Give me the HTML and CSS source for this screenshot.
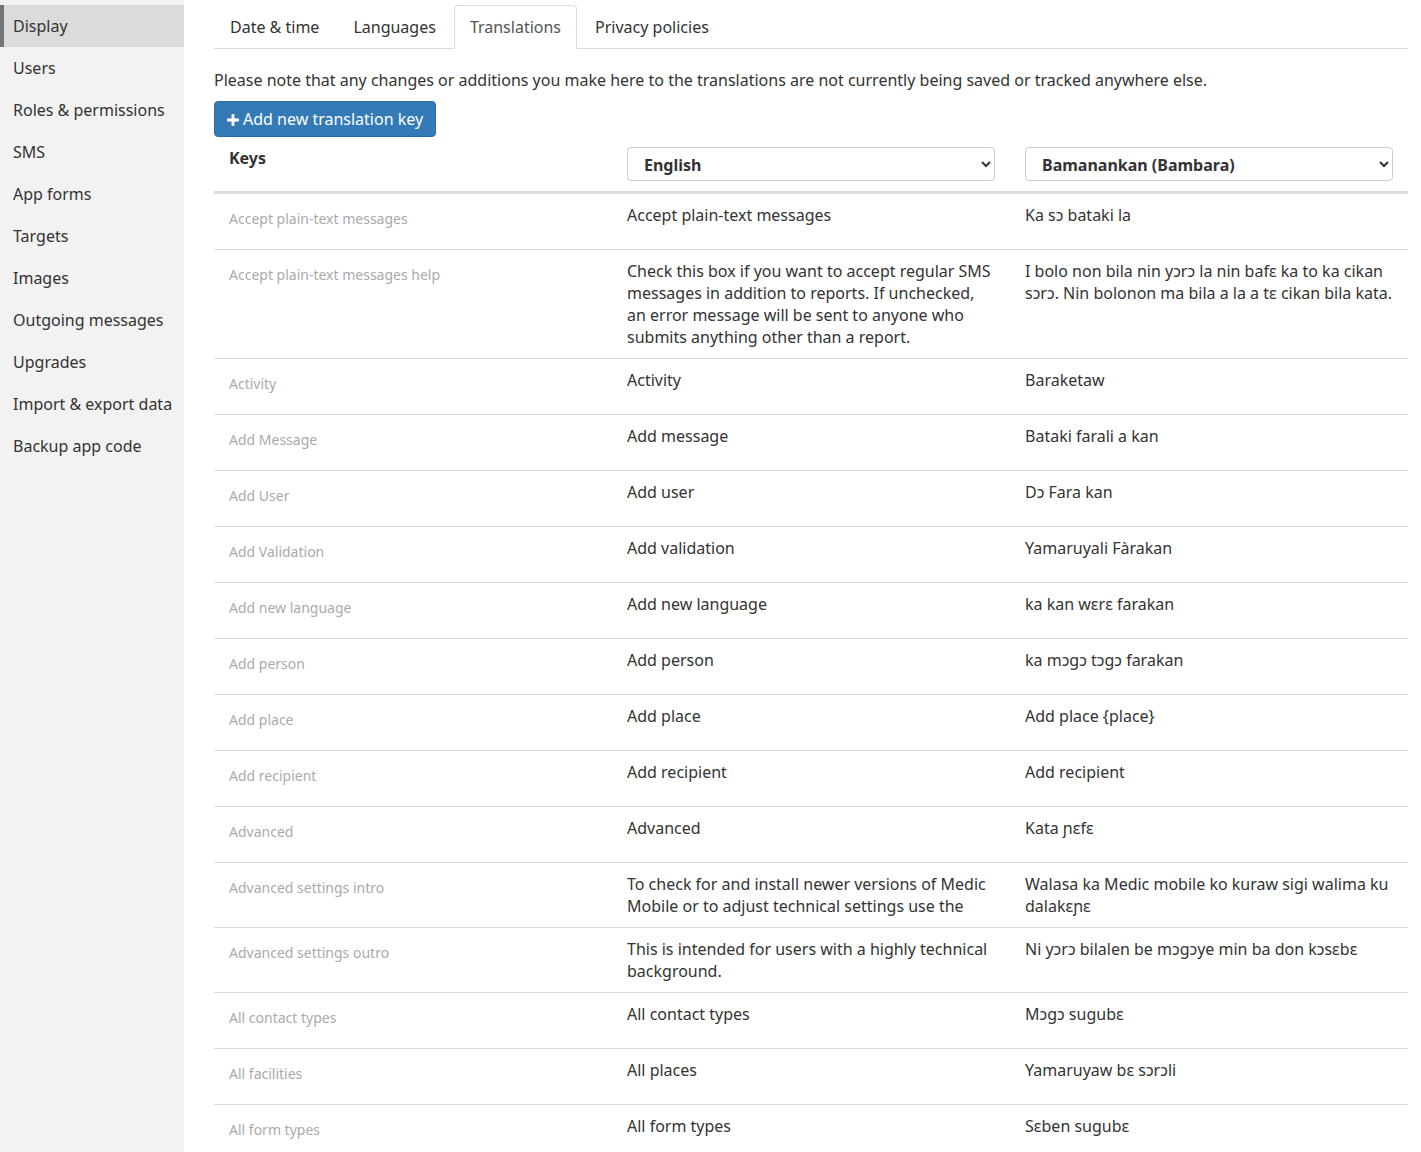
FILE: index.html
```html
<!DOCTYPE html>
<html>
<head>
  <meta charset="UTF-8">
  <title>App settings - Translations</title>
  <link rel="stylesheet" href="styles.css">
</head>
<body>
  <div class="layout">
    <ul class="sidebar">
      <li class="side-item active">Display</li>
      <li class="side-item">Users</li>
      <li class="side-item">Roles &amp; permissions</li>
      <li class="side-item">SMS</li>
      <li class="side-item">App forms</li>
      <li class="side-item">Targets</li>
      <li class="side-item">Images</li>
      <li class="side-item">Outgoing messages</li>
      <li class="side-item">Upgrades</li>
      <li class="side-item">Import &amp; export data</li>
      <li class="side-item">Backup app code</li>
    </ul>

    <div class="main">
      <ul class="tabs">
        <li class="tab">Date &amp; time</li>
        <li class="tab">Languages</li>
        <li class="tab active">Translations</li>
        <li class="tab">Privacy policies</li>
      </ul>

      <p class="note">Please note that any changes or additions you make here to the translations are not currently being saved or tracked anywhere else.</p>

      <button class="btn-primary">
        <svg class="plus" width="12" height="12" viewBox="0 0 12 12"><path d="M4.6 0h2.8v4.6H12v2.8H7.4V12H4.6V7.4H0V4.6h4.6z" fill="#fff"/></svg>
        Add new translation key
      </button>

      <table class="translations">
        <thead>
          <tr>
            <th class="keys-head">Keys</th>
            <th>
              <select class="lang-select">
                <option>English</option>
              </select>
            </th>
            <th>
              <select class="lang-select">
                <option>Bamanankan (Bambara)</option>
              </select>
            </th>
          </tr>
        </thead>
        <tbody>
          <tr><td class="key">Accept plain-text messages</td><td>Accept plain-text messages</td><td>Ka sɔ bataki la</td></tr>
          <tr><td class="key">Accept plain-text messages help</td><td>Check this box if you want to accept regular SMS messages in addition to reports. If unchecked, an error message will be sent to anyone who submits anything other than a report.</td><td>I bolo non bila nin yɔrɔ la nin bafɛ ka to ka cikan sɔrɔ. Nin bolonon ma bila a la a tɛ cikan bila kata.</td></tr>
          <tr><td class="key">Activity</td><td>Activity</td><td>Baraketaw</td></tr>
          <tr><td class="key">Add Message</td><td>Add message</td><td>Bataki farali a kan</td></tr>
          <tr><td class="key">Add User</td><td>Add user</td><td>Dɔ Fara kan</td></tr>
          <tr><td class="key">Add Validation</td><td>Add validation</td><td>Yamaruyali Fàrakan</td></tr>
          <tr><td class="key">Add new language</td><td>Add new language</td><td>ka kan wɛrɛ farakan</td></tr>
          <tr><td class="key">Add person</td><td>Add person</td><td>ka mɔgɔ tɔgɔ farakan</td></tr>
          <tr><td class="key">Add place</td><td>Add place</td><td>Add place {place}</td></tr>
          <tr><td class="key">Add recipient</td><td>Add recipient</td><td>Add recipient</td></tr>
          <tr><td class="key">Advanced</td><td>Advanced</td><td>Kata ɲɛfɛ</td></tr>
          <tr><td class="key">Advanced settings intro</td><td>To check for and install newer versions of Medic Mobile or to adjust technical settings use the</td><td>Walasa ka Medic mobile ko kuraw sigi walima ku dalakɛɲɛ</td></tr>
          <tr><td class="key">Advanced settings outro</td><td>This is intended for users with a highly technical background.</td><td>Ni yɔrɔ bilalen be mɔgɔye min ba don kɔsɛbɛ</td></tr>
          <tr><td class="key">All contact types</td><td>All contact types</td><td>Mɔgɔ sugubɛ</td></tr>
          <tr><td class="key">All facilities</td><td>All places</td><td>Yamaruyaw bɛ sɔrɔli</td></tr>
          <tr><td class="key">All form types</td><td>All form types</td><td>Sɛben sugubɛ</td></tr>
        </tbody>
      </table>
    </div>
  </div>
</body>
</html>
```

FILE: styles.css
```css
/* Base */
body {
  margin: 0;
  font-family: "Noto Sans", "Open Sans", sans-serif;
  font-size: 16px;
  line-height: 22px;
  color: #333;
  background-color: #fff;
}

.layout {
  display: flex;
  min-height: 100vh;
}

/* Sidebar */
.sidebar {
  width: 184px;
  flex-shrink: 0;
  margin: 0;
  padding: 5px 0 0;
  list-style: none;
  background-color: #f2f2f2;
}

.side-item {
  height: 42px;
  display: flex;
  align-items: center;
  padding-left: 9px;
  border-left: 4px solid transparent;
  color: #333;
  white-space: nowrap;
}

.side-item.active {
  background-color: #dbdbdb;
  border-left-color: #757575;
}

/* Main area */
.main {
  flex: 1;
  min-width: 0;
  padding: 5px 13px 0 30px;
}

.tabs {
  display: flex;
  margin: 0;
  padding: 0;
  list-style: none;
  border-bottom: 1px solid #ddd;
}

.tab {
  margin-right: 2px;
  margin-bottom: -1px;
  padding: 10px 15px;
  border: 1px solid transparent;
  border-radius: 4px 4px 0 0;
  color: #333;
}

.tab.active {
  border-color: #ddd;
  border-bottom-color: #fff;
  background-color: #fff;
  color: #555;
}

.note {
  margin: 20px 0 10px;
}

.btn-primary {
  display: inline-flex;
  align-items: center;
  gap: 4px;
  height: 36px;
  padding: 6px 12px;
  border: 1px solid #2e6da4;
  border-radius: 4px;
  background-color: #337ab7;
  color: #fff;
  font-family: inherit;
  font-size: 16px;
  line-height: 22px;
}

.plus {
  margin-top: 1px;
}

/* Translations table */
.translations {
  width: 100%;
  border-collapse: collapse;
  table-layout: fixed;
}

.translations th {
  padding: 10px 15px;
  border-bottom: 3px solid #ddd;
  text-align: left;
  vertical-align: top;
  font-weight: bold;
}

.lang-select {
  width: 100%;
  height: 34px;
  padding: 2px 12px 0;
  border: 1px solid #ccc;
  border-radius: 4px;
  background-color: #fff;
  color: #333;
  font-family: inherit;
  font-size: 16px;
  font-weight: bold;
}

.translations td {
  padding: 10px 15px;
  border-top: 1px solid #ddd;
  vertical-align: top;
}

.translations td.key {
  padding: 15px 15px 20px;
  font-size: 14px;
  line-height: 20px;
  color: #aaa;
}

.translations tbody tr:first-child td {
  border-top: none;
}
```
